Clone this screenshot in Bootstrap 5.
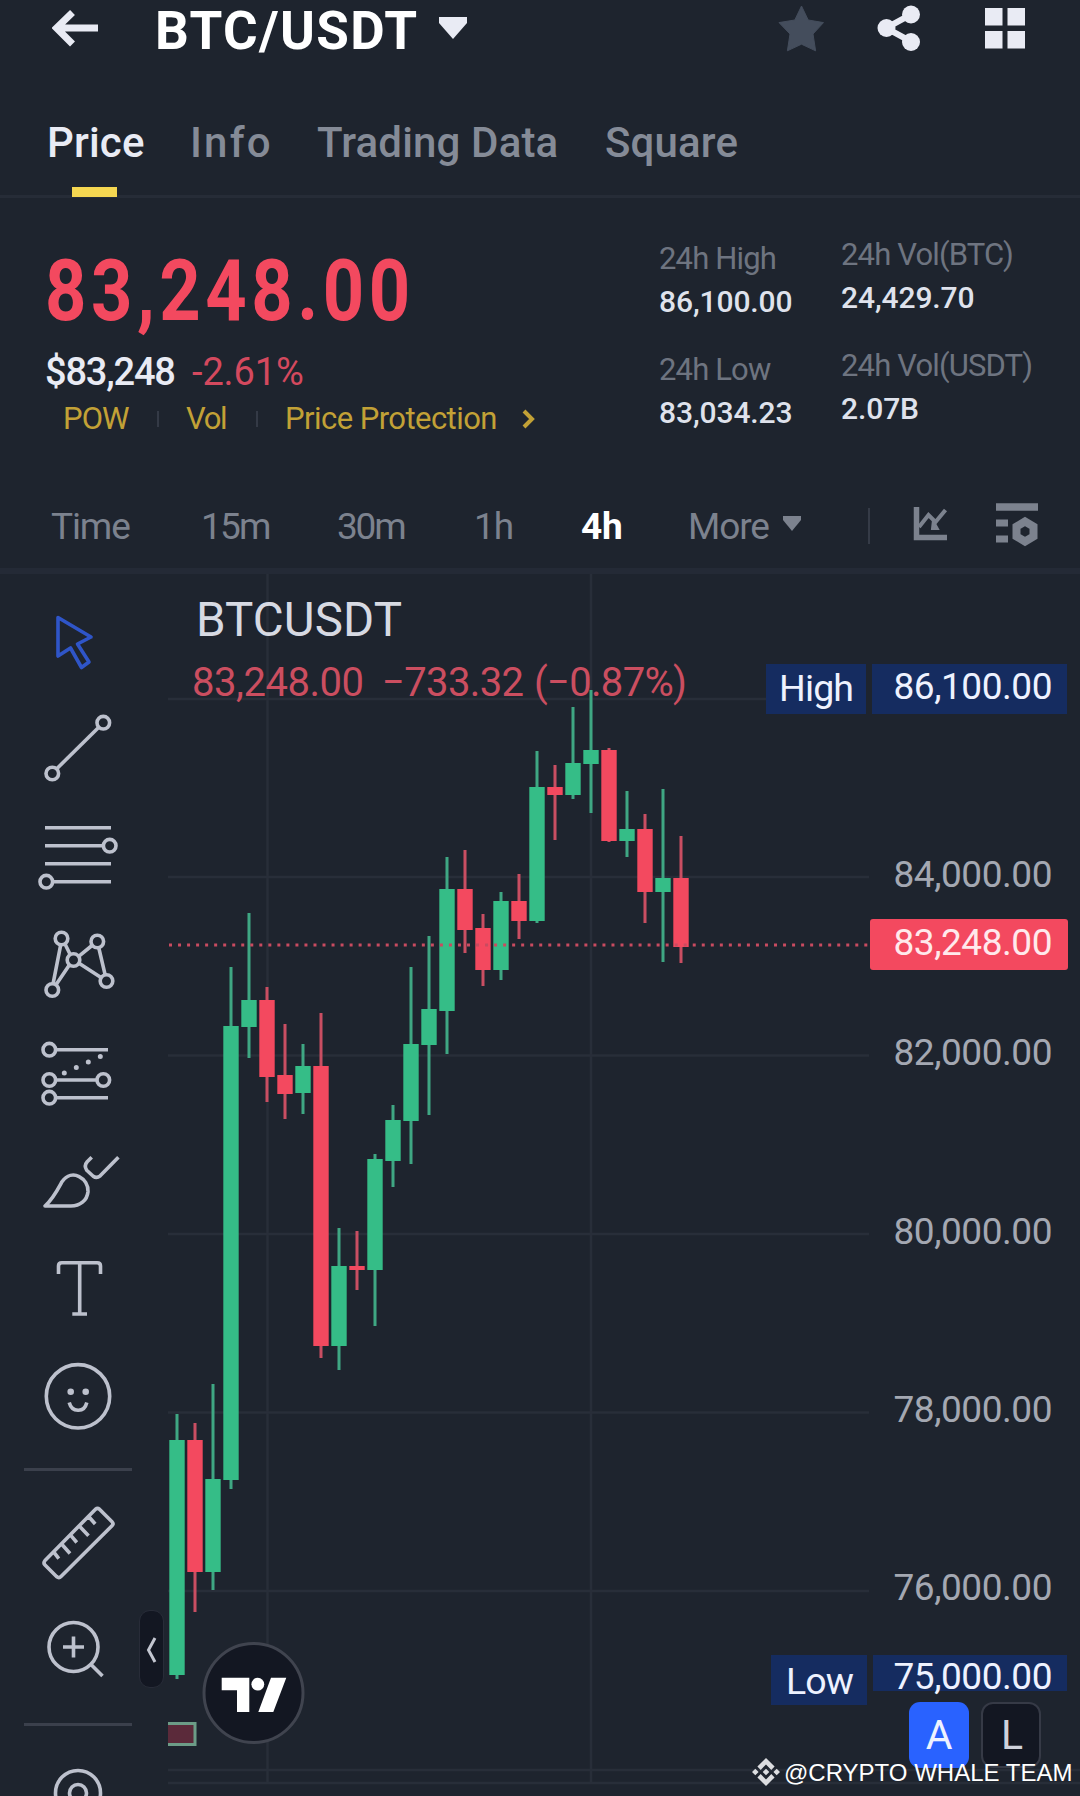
<!DOCTYPE html>
<html lang="en">
<head>
<meta charset="utf-8">
<meta name="viewport" content="width=device-width, initial-scale=1">
<title>BTC/USDT</title>
<link rel="stylesheet" href="https://cdn.jsdelivr.net/npm/bootstrap@5.3.0/dist/css/bootstrap.min.css">
<style>
  :root{--bg:#1e242e;--line:#262c37;--txt:#e9ebf4;--dim:#7c828e;--red:#f3495f;--green:#35bd87;--gold:#c2a136}
  body{background:var(--bg);color:var(--txt);font-family:Roboto,"Liberation Sans",sans-serif;width:1080px;height:1796px;overflow:hidden}
  svg{display:block;flex:none}
  .topbar{height:62px;padding:0 55px 0 52px}
  .pair-name{font-size:53px;font-weight:700;line-height:62px;letter-spacing:1.35px;width:285px;color:#fff;padding-left:1px}
  .tabs-row{height:136px;padding:51px 0 0 47px;border-bottom:3px solid var(--line);flex-wrap:nowrap}
  .tabs-row .nav-link{padding:0;color:#858b97;font-size:42px;font-weight:500;line-height:60px;letter-spacing:.15px;position:relative;height:85px;white-space:nowrap}
  .tabs-row .nav-link.active{color:var(--txt)}
  .tabs-row .nav-link.active::after{content:"";position:absolute;left:25px;bottom:1px;width:45px;height:10px;background:#f5d751}
  .t1{width:143px}.t2{width:127px}.t3{width:288px}
  .tabs-row .t2{letter-spacing:2.2px}
  .quote{height:286px;padding-left:45px}
  .quote-main{width:614px;padding-top:43px}
  .last{font-size:86px;font-weight:700;line-height:100px;letter-spacing:5.4px;color:var(--red);transform:scaleX(.84);transform-origin:0 50%}
  .sub{font-size:38px;line-height:63px}
  .sub .usd{width:147px;font-weight:500;letter-spacing:-1.2px}
  .sub .chg{color:#d4495e;letter-spacing:-.12px}
  .tags{font-size:31px;line-height:30px;color:var(--gold);padding-left:18px;height:30px}
  .tags i{width:2px;height:16px;background:#343a46}
  .g1{width:94px;letter-spacing:-.9px}.g2{width:70px;margin-left:27px;letter-spacing:-1.3px}.g3{width:236px;margin-left:27px;letter-spacing:-.55px}
  .stat-a{width:182px;padding-top:39px}.stat-b{padding-top:35px}
  .stat-label{font-size:31px;line-height:43px;color:#6e7480;letter-spacing:-.85px;white-space:nowrap}
  .stat-val{font-size:30px;line-height:43px;font-weight:500;letter-spacing:-.1px;margin-bottom:25px;color:#dfe2ec}
  .intervals{height:90px;padding-left:51px;border-bottom:6px solid #242a36;font-size:37px;color:var(--dim);letter-spacing:-1.1px}
  .intervals span{padding-top:1px}
  .intervals .on{color:#fff;font-weight:700;letter-spacing:-.2px}
  .v1{width:150px}.v2{width:136px;letter-spacing:-1.8px}.v3{width:137px;letter-spacing:-2.2px}.v4{width:107px}.v5{width:107px}.v6{width:94px}
  .vbar{width:2px;height:36px;background:#353b47}
  .workspace{height:1222px}
  .tools{width:168px}
  .tools svg{fill:none;stroke:#bdc1cd;stroke-width:3.6;stroke-linecap:butt;stroke-linejoin:round}
  .rule{width:108px;height:3px;margin-left:24px;background:#3b404c}
  .collapse-tab{position:absolute;left:139px;top:1036px;width:25px;height:78px;border-radius:11px;background:#131722;border:1px solid #282c38}
  .credit{position:absolute;left:752px;bottom:8px;font:24px/30px "Liberation Sans",Arial,sans-serif;color:#fff;white-space:nowrap}
  .credit-mark{margin-bottom:2px}
  text{font-family:Roboto,"Liberation Sans",sans-serif}
</style>
</head>
<body class="d-flex flex-column m-0">

<header class="topbar d-flex align-items-start">
  <svg width="102" height="56" viewBox="52 0 102 56" fill="none" stroke="#e9ebf4" stroke-width="7"><path d="M98 28H57M72.500 12.500 56.500 28l16 16"/></svg>
  <span class="pair-name">BTC/USDT</span>
  <svg width="28" height="56" viewBox="439 0 28 56"><path d="M439 17h28v6L453 39 439 23z" fill="#e9ebf4"/></svg>
  <svg class="ms-auto" width="46" height="56" viewBox="779 0 46 56"><path d="M802.500 6l6.700 14 15.300 2.600-10.500 11.400 2.600 16.800-14.100-6.600-14.100 6.600 2.600-16.800L780 22.600 795.800 20z" fill="#444d5c" stroke="#444d5c" stroke-linejoin="round"/></svg>
  <svg style="margin-left:53px" width="43" height="56" viewBox="877 0 43 56" fill="#e9ebf4"><path d="M911 14.500 886 28l25 13.500" fill="none" stroke="#e9ebf4" stroke-width="6"/><circle cx="886.500" cy="28" r="9"/><circle cx="911" cy="14.500" r="9"/><circle cx="911" cy="42" r="9"/></svg>
  <svg style="margin-left:65px" width="40" height="56" viewBox="985 0 40 56" fill="#e9ebf4"><path d="M985 8h17.500v17.500H985zM1007.500 8H1025v17.500h-17.500zM985 31h17.500v17.500H985zM1007.500 31H1025v17.500h-17.500z"/></svg>
</header>

<nav class="nav tabs-row">
  <a class="nav-link active t1">Price</a>
  <a class="nav-link t2">Info</a>
  <a class="nav-link t3">Trading Data</a>
  <a class="nav-link">Square</a>
</nav>

<section class="quote d-flex">
  <div class="quote-main">
    <div class="last">83,248.00</div>
    <div class="sub d-flex"><span class="usd">$83,248</span><span class="chg">-2.61%</span></div>
    <div class="tags d-flex align-items-center">
      <span class="g1">POW</span><i></i><span class="g2">Vol</span><i></i><span class="g3">Price Protection</span>
      <svg width="16" height="20" viewBox="0 0 16 20" fill="none" stroke="#c2a136" stroke-width="4"><path d="M3 2l8 8-8 8"/></svg>
    </div>
  </div>
  <div class="stat-a">
    <div class="stat-label">24h High</div><div class="stat-val">86,100.00</div>
    <div class="stat-label">24h Low</div><div class="stat-val">83,034.23</div>
  </div>
  <div class="stat-b">
    <div class="stat-label">24h Vol(BTC)</div><div class="stat-val">24,429.70</div>
    <div class="stat-label">24h Vol(USDT)</div><div class="stat-val">2.07B</div>
  </div>
</section>

<div class="intervals d-flex align-items-center">
  <span class="v1">Time</span><span class="v2">15m</span><span class="v3">30m</span><span class="v4">1h</span><span class="v5 on">4h</span><span class="v6">More</span>
  <svg width="86" height="84" viewBox="782 484 86 84"><path d="M783 516h18v4l-9 11-9-11z" fill="#7c828e"/></svg>
  <div class="vbar"></div>
  <svg width="172" height="84" viewBox="870 484 172 84" fill="none" stroke="#7c828e">
    <path d="M916.500 507v30.500H947" stroke-width="5.500"/><path d="M919 527l9.500-12 7 7 10-12" stroke-width="4"/><path d="M933 520l5 9-6 0z" fill="#7c828e" stroke-width="2"/>
    <path d="M996 507h42" stroke-width="7.500"/><path d="M996 523h12M996 539h12" stroke-width="7"/><path d="M1025 521.500l8.500 5v10l-8.500 5-8.500-5v-10z" stroke-width="8"/>
  </svg>
</div>

<main class="workspace d-flex position-relative">
  <aside class="tools d-flex flex-column">
    <svg width="168" height="126" viewBox="0 574 168 126"><path d="M58 617.500l33 19.500-13.500 7L89 662l-7.500 5.500-11-19.500L58 656z" stroke="#2f55c8"/></svg>
    <svg width="168" height="100" viewBox="0 700 168 100"><path d="M56.800 768.700l42-41.500"/><circle cx="52.300" cy="773.500" r="6.300"/><circle cx="103.300" cy="722.700" r="6.300"/></svg>
    <svg width="168" height="110" viewBox="0 800 168 110"><path d="M45 827.700h66M45 845.700h58M45 863.700h66M53 881.700h58"/><circle cx="109.700" cy="845.700" r="6.300"/><circle cx="46.300" cy="881.700" r="6.300"/></svg>
    <svg width="168" height="110" viewBox="0 910 168 110"><path d="M60.700 944.800l-7.600 38.900M65 944l5.200 10.500M79 956.200l13-10.700M98.700 947.500l6.400 27.200M79 963.300l22 14.300M69.500 964.800l-13.500 20"/><circle cx="61.500" cy="938.500" r="6.300"/><circle cx="97.300" cy="941.500" r="6.300"/><circle cx="73.500" cy="960" r="6.300"/><circle cx="52.300" cy="990" r="6.300"/><circle cx="106.500" cy="981" r="6.300"/></svg>
    <svg width="168" height="110" viewBox="0 1020 168 110"><path d="M56 1049.700h52M56 1080h41M56 1097.700h52"/><circle cx="49.300" cy="1049.700" r="6.300"/><circle cx="49.300" cy="1080" r="6.300"/><circle cx="103.300" cy="1080" r="6.300"/><circle cx="49.300" cy="1097.700" r="6.300"/><path d="M64.300 1073l36.500-16.700" stroke-width="5" stroke-linecap="round" stroke-dasharray="0 13.200"/></svg>
    <svg width="168" height="110" viewBox="0 1130 168 110"><path d="M45 1206c8-7 12.500-16 17-24.300 10-14 27-3 26 10-1 9-8 14.300-17 14.300zM91.700 1157.300l-4.500 4.500q-3.500 4-.5 8.500l6.500 6q3.500 2.500 7-.5l18.200-18.500"/></svg>
    <svg width="168" height="100" viewBox="0 1240 168 100"><path d="M58.500 1274v-8q0-3.300 3.300-3.300h35.400q3.300 0 3.300 3.300v8M79.700 1262.700V1314M72.300 1314H87"/></svg>
    <svg width="168" height="128" viewBox="0 1340 168 128"><circle cx="78" cy="1396.300" r="31.700"/><path d="M69.200 1402.500q2 7.500 8.800 7.800t8.800-7.800"/><g fill="#bdc1cd" stroke="none"><circle cx="70.700" cy="1391.700" r="3.300"/><circle cx="85.700" cy="1391.700" r="3.300"/></g></svg>
    <div class="rule"></div>
    <svg width="168" height="129" viewBox="0 1471 168 129"><path d="M95.500 1509.200q2-1.500 4 0l12.500 12.500q2 2 0 4L61 1576.500q-2 2-4.500 0L45 1565q-2-2 0-4.500zM53.800 1552.200l5 6.500M62 1544.500l8 9M71 1535.700l5.800 6.800M80 1526.700l8.500 9M89.500 1517.500l5.700 6.500"/></svg>
    <svg width="168" height="123" viewBox="0 1600 168 123"><circle cx="73.500" cy="1647" r="24.500"/><path d="M63 1647h21M73.500 1636.500v21M91 1664.500l11.500 11.500"/></svg>
    <div class="rule"></div>
    <svg width="168" height="70" viewBox="0 1726 168 70"><circle cx="78" cy="1793" r="22.500"/><circle cx="78" cy="1793" r="8.500"/></svg>
  </aside>

  <svg id="chart" width="912" height="1222" viewBox="168 574 912 1222">
    <g stroke="#282e39" stroke-width="2.500" id="grid">
      <path d="M267.500 574V1782M591 574V1782M168 1770h912M168 1783h912" fill="none"/>
    </g>
    <g id="candles"></g>
    <path d="M169 945H868" stroke="#c94b60" stroke-width="3" stroke-dasharray="3 6.030"/>
    <path d="M168 1723.500h27v21h-27" fill="#5b2a3a" stroke="#6c9c87" stroke-width="3"/>
    <g fill="#152c60">
      <path d="M766 664h100v50H766zM872 664h195v50H872zM771 1655h96v50H771zM873 1655h194v36H873z"/>
    </g>
    <rect x="870" y="919" width="198" height="51" rx="3" fill="#f3495f"/>
    <text x="196" y="636" font-size="47.500" fill="#d7dae3" textLength="206">BTCUSDT</text>
    <g font-size="40" fill="#cb4e60">
      <text x="192" y="696" textLength="172">83,248.00</text>
      <text x="382" y="696" textLength="142">−733.32</text>
      <text x="534" y="696" textLength="153">(−0.87%)</text>
    </g>
    <g font-size="37.500" fill="#eef2ff">
      <text x="779" y="701" textLength="75">High</text>
      <text x="786" y="1694" textLength="68">Low</text>
    </g>
    <g id="axis" font-size="37"></g>
    <g>
      <rect x="909" y="1702" width="60" height="66" rx="11" fill="#2962ff"/>
      <rect x="982" y="1703" width="58" height="64" rx="11" fill="#131722" stroke="#363a46" stroke-width="2"/>
      <text x="939" y="1749" font-size="41" fill="#eef2ff" text-anchor="middle">A</text>
      <text x="1012" y="1749" font-size="41" fill="#cfd2dc" text-anchor="middle">L</text>
    </g>
    <circle cx="253.500" cy="1693" r="49.500" fill="#131722" stroke="#40444f" stroke-width="3"/>
    <g fill="#fff"><path d="M221.700 1677.700h27.600V1712H237v-21.700h-15.300zM271 1677.700h15.300l-13 34.300h-15z"/><circle cx="257.800" cy="1684.200" r="6.400"/></g>
  </svg>

  <div class="collapse-tab"><svg width="23" height="76" viewBox="140 1611 23 76" fill="none" stroke="#c3c6d0" stroke-width="3"><path d="M155 1638l-6.500 12 6.500 12"/></svg></div>
  <div class="credit d-flex align-items-center">
    <svg class="credit-mark" width="32" height="28" viewBox="0 0 32 28" fill="#dcdde0"><path d="M14 0l8.600 8.600-3.300 3.300L14 6.600l-5.300 5.300-3.300-3.300zM14 28l8.600-8.600-3.300-3.300L14 21.400l-5.300-5.300-3.300 3.300zM3.300 10.700L6.600 14l-3.300 3.300L0 14zM24.700 10.700L28 14l-3.300 3.300-3.300-3.300zM14 10.700l3.300 3.300-3.300 3.300-3.300-3.300z"/></svg>
    <span>@CRYPTO WHALE TEAM</span>
  </div>
</main>

<script src="https://cdn.jsdelivr.net/npm/bootstrap@5.3.0/dist/js/bootstrap.bundle.min.js"></script>
<script>
  const NS = 'http://www.w3.org/2000/svg';
  function add(parent, tag, attrs, text) {
    const el = document.createElementNS(NS, tag);
    for (const k in attrs) el.setAttribute(k, attrs[k]);
    if (text) el.textContent = text;
    document.getElementById(parent).appendChild(el);
  }
  // direction, wick top, body top, body bottom, wick bottom
  const candles = [
    ['g',1414,1440,1675,1679],['r',1423,1440,1572,1612],['g',1384,1479,1572,1590],['g',967,1026,1480,1489],
    ['g',913,1000,1027,1058],['r',987,1000,1077,1102],['r',1024,1075,1094,1119],['g',1044,1066,1093,1114],
    ['r',1013,1066,1346,1358],['g',1228,1266,1346,1370],['r',1231,1266,1270,1290],['g',1154,1159,1270,1326],
    ['g',1105,1120,1161,1187],['g',967,1044,1121,1164],['g',936,1009,1045,1115],['g',857,889,1011,1054],
    ['r',850,889,930,953],['r',914,928,970,986],['g',892,901,970,980],['r',874,901,921,939],
    ['g',751,787,921,923],['r',765,787,795,840],['g',707,763,795,799],['g',690,750,764,813],
    ['r',748,750,841,842],['g',791,829,841,857],['r',814,829,892,923],['g',789,878,892,962],['r',836,878,947,963]
  ];
  candles.forEach(([d, hi, a, b, lo], i) => {
    const x = 177 + i * 18;
    add('candles', 'rect', {x: x - 1.5, y: hi, width: 3, height: lo - hi, fill: d === 'g' ? '#3fa783' : '#c94e62'});
    add('candles', 'rect', {x: x - 7.700, y: a, width: 15.400, height: b - a, fill: d === 'g' ? '#35bd87' : '#f3495f'});
  });
  [699, 877, 1055.5, 1234, 1412.5, 1591].forEach(y => add('grid', 'path', {d: `M168 ${y}H${y === 699 ? 766 : 869}`}));
  [['86,100.00',699,'#eef2ff'],['84,000.00',886.5,'#a4a8b2'],['83,248.00',954.5,'#ffe9ec'],['82,000.00',1065,'#a4a8b2'],
   ['80,000.00',1243.5,'#a4a8b2'],['78,000.00',1422,'#a4a8b2'],['76,000.00',1600,'#a4a8b2'],['75,000.00',1688.5,'#eef2ff']]
    .forEach(([t, y, fill]) => add('axis', 'text', {x: 893.5, y, fill, textLength: 159}, t));
</script>
</body>
</html>
